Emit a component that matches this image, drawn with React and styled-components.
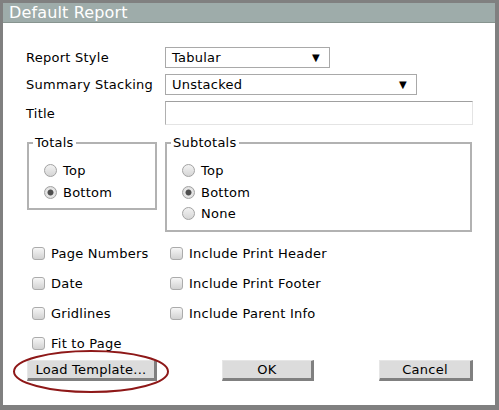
import React from "react";
import styled, { createGlobalStyle } from "styled-components";

const GlobalStyle = createGlobalStyle`
    body {
        margin: 0;
        font-family: "DejaVu Sans", Verdana, sans-serif;
        font-size: 13px;
        letter-spacing: 0.25px;
        color: #000;
    }
`;

const checks = [
    "Page Numbers",
    "Include Print Header",
    "Date",
    "Include Print Footer",
    "Gridlines",
    "Include Parent Info",
    "Fit to Page",
];

const RadioGroup = ({ title, name, options, checked, width }) => (
    <Group $width={width}>
        <Legend>{title}</Legend>
        <RadioList>
            {options.map((opt) => (
                <RadioLabel key={opt}>
                    <Radio type="radio" name={name} defaultChecked={opt === checked} />
                    {opt}
                </RadioLabel>
            ))}
        </RadioList>
    </Group>
);

const App = () => {
    return (
        <>
            <GlobalStyle />
            <Window>
                <TitleBar>Default Report</TitleBar>
                <Content>
                    <FormGrid>
                        <Label>Report Style</Label>
                        <Select $width={165}>
                            <span>Tabular</span>
                            <Arrow>▼</Arrow>
                        </Select>
                        <Label>Summary Stacking</Label>
                        <Select $width={252}>
                            <span>Unstacked</span>
                            <Arrow>▼</Arrow>
                        </Select>
                        <Label>Title</Label>
                        <TextInput />
                    </FormGrid>

                    <GroupRow>
                        <RadioGroup
                            title="Totals"
                            name="totals"
                            options={["Top", "Bottom"]}
                            checked="Bottom"
                            width={130}
                        />
                        <RadioGroup
                            title="Subtotals"
                            name="subtotals"
                            options={["Top", "Bottom", "None"]}
                            checked="Bottom"
                            width={307}
                        />
                    </GroupRow>

                    <CheckGrid>
                        {checks.map((c) => (
                            <CheckLabel key={c}>
                                <Checkbox type="checkbox" />
                                {c}
                            </CheckLabel>
                        ))}
                    </CheckGrid>

                    <ButtonRow>
                        <Circled>
                            <Button $width={130}>Load Template...</Button>
                            <Ellipse width="156" height="43" viewBox="0 0 156 43">
                                <ellipse cx="78" cy="21.5" rx="77" ry="20.5" fill="none" stroke="#8e1818" strokeWidth="2" />
                            </Ellipse>
                        </Circled>
                        <Button $width={92}>OK</Button>
                        <Button $width={94}>Cancel</Button>
                    </ButtonRow>
                </Content>
            </Window>
        </>
    );
};

const Window = styled.div`
    width: 499px;
    height: 410px;
    box-sizing: border-box;
    border: 3px solid #808080;
    border-right-width: 4px;
    border-bottom-width: 5px;
    background: #fff;
    display: flex;
    flex-direction: column;
`;
const TitleBar = styled.div`
    height: 19px;
    line-height: 19px;
    background: #9eacaa;
    border-bottom: 1px solid #87948f;
    color: #fff;
    font-size: 16px;
    letter-spacing: 0.15px;
    padding-left: 6px;
`;
const Content = styled.div`
    display: flex;
    flex-direction: column;
    padding-top: 24px;
`;
const FormGrid = styled.div`
    display: grid;
    grid-template-columns: 139px auto;
    row-gap: 6px;
    align-items: center;
    padding-left: 23px;
`;
const Label = styled.span`
    white-space: nowrap;
`;
const Select = styled.div`
    display: flex;
    align-items: center;
    justify-content: space-between;
    box-sizing: border-box;
    width: ${(p) => p.$width}px;
    height: 21px;
    border: 1px solid #a9a9a9;
    padding: 0 9px 0 6px;
`;
const Arrow = styled.span`
    font-size: 10px;
`;
const TextInput = styled.input`
    box-sizing: border-box;
    width: 308px;
    height: 24px;
    margin: 0;
    border: 1px solid #e4e4e4;
    border-top-color: #a0a0a0;
    border-left-color: #b0b0b0;
`;
const GroupRow = styled.div`
    display: flex;
    align-items: flex-start;
    gap: 8px;
    padding-left: 24px;
    margin-top: 10px;
`;
const Group = styled.fieldset`
    box-sizing: border-box;
    width: ${(p) => p.$width}px;
    margin: 0;
    border: 2px solid #b2b2b2;
    padding: 0 0 5px 4px;
`;
const Legend = styled.legend`
    padding: 0 2px;
    font-size: 13px;
`;
const RadioList = styled.div`
    display: flex;
    flex-direction: column;
    padding: 10px 0 0 11px;
`;
const RadioLabel = styled.label`
    display: flex;
    align-items: center;
    gap: 6px;
    height: 21.5px;
`;
const Radio = styled.input`
    appearance: none;
    width: 13px;
    height: 13px;
    margin: 0;
    border: 1px solid #a2a2a2;
    border-radius: 50%;
    background: linear-gradient(#f2f2f2, #d6d6d6);
    &:checked {
        background: radial-gradient(circle, #4e4e4e 0 2.6px, #e8e8e8 3.4px, #d4d4d4 100%);
    }
`;
const CheckGrid = styled.div`
    display: grid;
    grid-template-columns: 138px auto;
    grid-auto-rows: 30px;
    align-items: center;
    padding-left: 29px;
    margin-top: 7px;
`;
const CheckLabel = styled.label`
    display: flex;
    align-items: center;
    gap: 6px;
    white-space: nowrap;
`;
const Checkbox = styled.input`
    appearance: none;
    width: 13px;
    height: 13px;
    margin: 0;
    border: 1px solid #ababab;
    border-radius: 3px;
    background: linear-gradient(#f6f6f6, #d2d2d2);
`;
const ButtonRow = styled.div`
    display: flex;
    justify-content: space-between;
    align-items: center;
    padding: 0 22px 0 24px;
    margin-top: 1px;
`;
const Circled = styled.div`
    position: relative;
    display: flex;
`;
const Ellipse = styled.svg`
    position: absolute;
    left: -14px;
    top: -10px;
    pointer-events: none;
    overflow: visible;
`;
const Button = styled.button`
    box-sizing: border-box;
    width: ${(p) => p.$width}px;
    height: 21px;
    padding: 0;
    border-style: solid;
    border-width: 1px 3px 3px 1px;
    border-color: #e6e6e6 #808080 #808080 #e6e6e6;
    background: #dcdcdc;
    font-family: inherit;
    font-size: 13px;
    letter-spacing: 0.25px;
    color: #000;
`;

export default App;
